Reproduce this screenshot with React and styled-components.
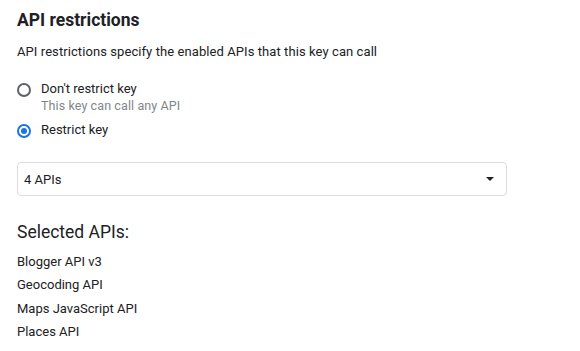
import React from 'react'
import styled, { createGlobalStyle } from 'styled-components'

const GlobalStyle = createGlobalStyle`
  body {
    margin: 0;
    background: #fff;
    font-family: Roboto, "Liberation Sans", Arial, sans-serif;
    color: #202124;
  }
`

const Page = styled.div`
  padding: 8px 16px 0 17px;
  width: 580px;
  box-sizing: border-box;
`

const Title = styled.h2`
  margin: 0;
  font-size: 17.5px;
  font-weight: 700;
  line-height: 24px;
  color: #202124;
`

const Desc = styled.p`
  margin: 12px 0 0;
  font-size: 13px;
  line-height: 16px;
  letter-spacing: 0.08px;
  color: #202124;
`

const RadioGroup = styled.div`
  margin-top: 20.5px;
  display: flex;
  flex-direction: column;
  gap: 8px;
`

const RadioRow = styled.label`
  display: flex;
  align-items: flex-start;
  gap: 10px;
`

const Circle = styled.span`
  width: 14px;
  height: 14px;
  box-sizing: border-box;
  border-radius: 50%;
  border: 2px solid ${p => (p.checked ? '#1a73e8' : '#5f6368')};
  display: flex;
  align-items: center;
  justify-content: center;
  flex-shrink: 0;
  margin-top: 2.5px;

  &::after {
    content: '';
    width: 6px;
    height: 6px;
    border-radius: 50%;
    background: ${p => (p.checked ? '#1a73e8' : 'transparent')};
  }
`

const RadioText = styled.div`
  display: flex;
  flex-direction: column;
`

const RadioLabel = styled.span`
  font-size: 13px;
  line-height: 16px;
  color: #202124;
`

const RadioHint = styled.span`
  margin-top: 1px;
  font-size: 12.5px;
  line-height: 16px;
  letter-spacing: 0.1px;
  color: #80868b;
`

const Select = styled.div`
  margin-top: 24px;
  width: 490px;
  height: 34px;
  box-sizing: border-box;
  border: 1px solid #dadce0;
  border-radius: 4px;
  display: flex;
  align-items: center;
  justify-content: space-between;
  padding: 0 12px 0 6px;
  font-size: 13px;
  color: #202124;
`

const Caret = styled.span`
  width: 0;
  height: 0;
  border-left: 4.5px solid transparent;
  border-right: 4.5px solid transparent;
  border-top: 4.5px solid #202124;
`

const Subheading = styled.h3`
  margin: 25px 0 0;
  font-size: 17.5px;
  font-weight: 400;
  line-height: 22px;
  color: #202124;
`

const ApiList = styled.ul`
  list-style: none;
  margin: 7px 0 0;
  padding: 0;
`

const ApiItem = styled.li`
  font-size: 13px;
  line-height: 23.3px;
  color: #202124;
`

const apis = ['Blogger API v3', 'Geocoding API', 'Maps JavaScript API', 'Places API']

const App = () => {
  return (
    <Page>
      <GlobalStyle />
      <Title>API restrictions</Title>
      <Desc>API restrictions specify the enabled APIs that this key can call</Desc>
      <RadioGroup>
        <RadioRow>
          <Circle />
          <RadioText>
            <RadioLabel>Don't restrict key</RadioLabel>
            <RadioHint>This key can call any API</RadioHint>
          </RadioText>
        </RadioRow>
        <RadioRow>
          <Circle checked />
          <RadioText>
            <RadioLabel>Restrict key</RadioLabel>
          </RadioText>
        </RadioRow>
      </RadioGroup>
      <Select>
        <span>4 APIs</span>
        <Caret />
      </Select>
      <Subheading>Selected APIs:</Subheading>
      <ApiList>
        {apis.map(api => (
          <ApiItem key={api}>{api}</ApiItem>
        ))}
      </ApiList>
    </Page>
  )
}

export default App
